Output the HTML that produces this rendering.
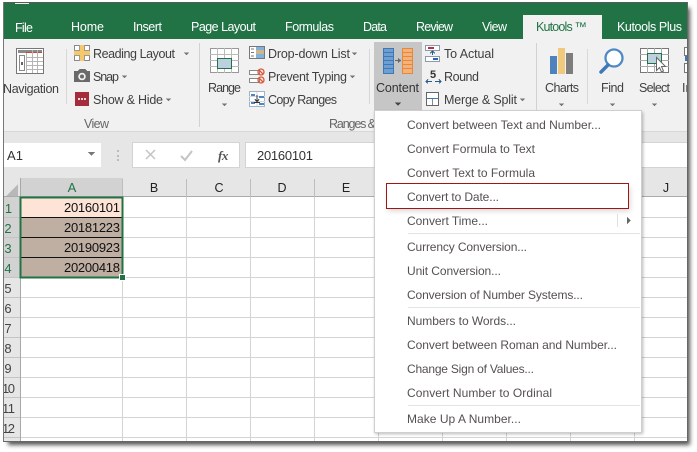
<!DOCTYPE html>
<html><head><meta charset="utf-8"><title>Kutools Content menu</title>
<style>
html,body{margin:0;padding:0;background:#fff;width:697px;height:452px;overflow:hidden}
svg{display:block}
text{font-family:"Liberation Sans",sans-serif;font-size:12.5px;fill:#404040}
.t{fill:#fff;font-size:12.5px}
.m{fill:#565050;font-size:12px}
.h{fill:#222;font-size:12.5px}
.r{fill:#444;font-size:13px}
.s{fill:#217346;font-size:13px}
.d{fill:#111;font-size:13px}
</style></head><body>
<svg width="697" height="452" viewBox="0 0 697 452" xmlns="http://www.w3.org/2000/svg" shape-rendering="crispEdges">
<defs>
<filter id="sh" x="-5%" y="-5%" width="110%" height="110%"><feGaussianBlur stdDeviation="2"/></filter>
<filter id="ms" x="-5%" y="-5%" width="110%" height="110%"><feGaussianBlur stdDeviation="1.5"/></filter>
<filter id="rs" x="-5%" y="-30%" width="110%" height="160%"><feGaussianBlur stdDeviation="3"/></filter>
<clipPath id="win"><rect x="3" y="2" width="684" height="440"/></clipPath>
</defs>

<!-- window shadow -->
<rect x="8" y="8" width="682" height="437" fill="#555" filter="url(#sh)"/>
<!-- window -->
<rect x="3" y="2" width="685" height="440" fill="#fff"/>

<!-- title band -->
<rect x="3" y="3" width="685" height="36" fill="#217346"/>
<rect x="15" y="3" width="14" height="1" fill="#e8f0ea"/>
<rect x="523" y="15" width="79" height="24" fill="#f1f1f1"/>
<text class="t" x="15" y="32" textLength="18">File</text>
<text class="t" x="71" y="31" textLength="33">Home</text>
<text class="t" x="133" y="31" textLength="29">Insert</text>
<text class="t" x="191" y="31" textLength="65">Page Layout</text>
<text class="t" x="285" y="31" textLength="49">Formulas</text>
<text class="t" x="363" y="31" textLength="24">Data</text>
<text class="t" x="416" y="31" textLength="37">Review</text>
<text class="t" x="482" y="31" textLength="25">View</text>
<text x="536" y="31" textLength="51" style="fill:#217346">Kutools ™</text>
<text class="t" x="617" y="31" textLength="65">Kutools Plus</text>

<!-- ribbon -->
<rect x="3" y="39" width="685" height="92" fill="#f1f1f1"/>
<rect x="3" y="131" width="685" height="47" fill="#e6e6e6"/>
<rect x="3" y="131" width="685" height="1" fill="#d8d8d8"/>
<rect x="66" y="49" width="1" height="55" fill="#d8d8d8"/>
<rect x="199" y="43" width="1" height="84" fill="#d2d2d2"/>
<rect x="369" y="49" width="1" height="55" fill="#d8d8d8"/>
<rect x="536" y="43" width="1" height="84" fill="#d2d2d2"/>
<rect x="587" y="49" width="1" height="55" fill="#d8d8d8"/>

<!-- Navigation icon -->
<rect x="16.500" y="48.500" width="27" height="25" fill="#fff" stroke="#777"/>
<rect x="18" y="50" width="24" height="3" fill="#8a8a8a"/>
<rect x="26" y="52" width="16" height="1" fill="#c8473a"/>
<path d="M26.500 53V73M32.500 50V73M37.500 50V73M27 57.500H43M27 61.500H43M27 65.500H43M27 69.500H43" stroke="#b5b5b5" fill="none"/>
<rect x="19.500" y="55.500" width="5" height="15" fill="#fff" stroke="#8a8a8a"/>
<rect x="21" y="62" width="2" height="3" fill="#666"/>
<text x="3" y="93" textLength="56">Navigation</text>

<!-- Reading layout icon -->
<rect x="74.500" y="45.500" width="15" height="15" fill="#fff" stroke="#888"/>
<path d="M79.500 45V61M84.500 45V61M74 50.500H90M74 55.500H90" stroke="#999" fill="none"/>
<rect x="74" y="51" width="16" height="4" fill="#f5c969"/>
<rect x="80" y="45" width="4" height="16" fill="#f5c969"/>
<text x="93" y="58" textLength="82">Reading Layout</text>
<path d="M184 52.500h5l-2.500 3z" fill="#777"/>

<!-- Snap icon -->
<path d="M74 71h4l1.500-2h6l1.500 2h3v11H74z" fill="#6a6a6a"/>
<circle cx="82" cy="76.500" r="3.800" fill="#f1f1f1" shape-rendering="auto"/>
<circle cx="82" cy="76.500" r="2" fill="#6a6a6a" shape-rendering="auto"/>
<text x="93" y="81" textLength="26">Snap</text>
<path d="M122 75.500h5l-2.500 3z" fill="#777"/>

<!-- Show & Hide icon -->
<rect x="75" y="92" width="14" height="14" fill="#a52c3a"/>
<rect x="78" y="98" width="2" height="2" fill="#f3d9dc"/>
<rect x="81" y="98" width="2" height="2" fill="#f3d9dc"/>
<rect x="84" y="98" width="2" height="2" fill="#f3d9dc"/>
<text x="93" y="104" textLength="70">Show &amp; Hide</text>
<path d="M166 98.500h5l-2.500 3z" fill="#777"/>

<text x="84" y="128" textLength="25" style="fill:#666">View</text>

<!-- Range icon -->
<rect x="210.500" y="48.500" width="28" height="24" fill="#fff" stroke="#999"/>
<path d="M217.500 48V73M224.500 48V73M231.500 48V73M210 54.500H239M210 60.500H239M210 66.500H239" stroke="#bbb" fill="none"/>
<rect x="217.500" y="58.500" width="14" height="10" fill="#bcd0e0" stroke="#217346"/>
<text x="208" y="92" textLength="33">Range</text>
<path d="M222 103.500h5l-2.500 3z" fill="#777"/>

<!-- Drop-down list icon -->
<rect x="249.500" y="46.500" width="15" height="12" fill="#fff" stroke="#777"/>
<rect x="256" y="47" width="8" height="3" fill="#7fb2dc"/>
<rect x="256" y="50" width="8" height="4" fill="#cdb68a"/>
<rect x="256" y="54" width="8" height="4" fill="#7fb2dc"/>
<path d="M251 49h3M251 52.500h3M251 56h3" stroke="#777" fill="none"/>
<text x="268" y="58" textLength="82">Drop-down List</text>
<path d="M352 52.500h5l-2.500 3z" fill="#777"/>

<!-- Prevent typing icon -->
<rect x="249.500" y="70.500" width="10" height="4" fill="#fff" stroke="#888"/>
<rect x="249.500" y="78.500" width="10" height="4" fill="#fff" stroke="#888"/>
<g shape-rendering="auto" fill="none" stroke="#d9583b" stroke-width="1.300">
<circle cx="261" cy="72" r="3"/><path d="M259 70l4 4"/>
<circle cx="261" cy="80" r="3"/><path d="M259 78l4 4"/>
</g>
<text x="268" y="81" textLength="79">Prevent Typing</text>
<path d="M350 75.500h5l-2.500 3z" fill="#777"/>

<!-- Copy ranges icon -->
<rect x="249.500" y="91.500" width="15" height="15" fill="#fff" stroke="#9fb4c6"/>
<path d="M249 96.500H265M249 101.500H265M257 92V106" stroke="#d0d8df" fill="none"/>
<rect x="251" y="94" width="4" height="2" fill="#4f86c0"/>
<rect x="259" y="96" width="5" height="2" fill="#4f86c0"/>
<rect x="251" y="102" width="4" height="2" fill="#4f86c0"/>
<rect x="259" y="103" width="5" height="2" fill="#4f86c0"/>
<path d="M257 95v6M255 99.500l2 2 2-2M254 102.500h6" stroke="#333" fill="none"/>
<text x="268" y="104" textLength="69">Copy Ranges</text>

<text x="329" y="128" textLength="47" style="fill:#666">Ranges &amp;</text>

<!-- Content button -->
<rect x="374" y="42" width="48" height="69" fill="#c6c6c6"/>
<rect x="383.500" y="48.500" width="10" height="25" fill="#6f9fd0" stroke="#3f78b8"/>
<path d="M384 52.500H393M384 56.500H393M384 60.500H393M384 64.500H393M384 68.500H393" stroke="#3f78b8" fill="none"/>
<rect x="402.500" y="48.500" width="10" height="25" fill="#f3b27a" stroke="#e8873a"/>
<path d="M403 52.500H412M403 56.500H412M403 60.500H412M403 64.500H412M403 68.500H412" stroke="#e8873a" fill="none"/>
<path d="M395 60.500h5M398.500 59v3l2-1.500z" stroke="#666" fill="#666"/>
<text x="376" y="92" textLength="43" style="fill:#333">Content</text>
<path d="M395 102.500h6l-3 3.500z" fill="#444"/>

<!-- To Actual icon -->
<rect x="425.500" y="45.500" width="14" height="5" fill="#fff" stroke="#8a9bb0"/>
<rect x="428" y="47" width="6" height="2" fill="#b3343f"/>
<rect x="425.500" y="56.500" width="14" height="5" fill="#fff" stroke="#8a9bb0"/>
<rect x="433" y="58" width="5" height="2" fill="#2e5fb3"/>
<path d="M432.500 51v4M430 53.500l2.500-2.500 2.500 2.500" stroke="#2a5a8a" fill="none"/>
<text x="444" y="58" textLength="50">To Actual</text>

<!-- Round icon -->
<text x="430" y="78" style="font-size:11px;font-weight:bold;fill:#333" textLength="7">5</text>
<path d="M426 81.500h6M428 79.500l-2 2 2 2M435 81.500h6M439 79.500l2 2-2 2" stroke="#2a5a8a" fill="none"/>
<text x="444" y="81" textLength="35">Round</text>

<!-- Merge icon -->
<rect x="426.500" y="92.500" width="12" height="13" fill="#fff" stroke="#666"/>
<path d="M427 98.500H438" stroke="#3f78b8" fill="none"/>
<path d="M432.500 99V105" stroke="#888" fill="none"/>
<text x="444" y="104" textLength="73">Merge &amp; Split</text>
<path d="M520 98.500h5l-2.500 3z" fill="#777"/>

<!-- Charts icon -->
<rect x="550" y="56" width="7" height="18" fill="#4f81bd"/>
<rect x="558" y="48" width="7" height="26" fill="#efc97d"/>
<rect x="566" y="53" width="7" height="21" fill="#7d7d7d"/>
<text x="545" y="92" textLength="34">Charts</text>
<path d="M559 103.500h5l-2.500 3z" fill="#777"/>

<!-- Find icon -->
<g shape-rendering="auto" fill="none">
<circle cx="614" cy="58" r="8.500" stroke="#4f8ac4" stroke-width="2.300" fill="#fff"/>
<path d="M608 65l-7 7" stroke="#3f78b8" stroke-width="3.500" stroke-linecap="round"/>
</g>
<text x="601" y="92" textLength="23">Find</text>
<path d="M610 103.500h5l-2.500 3z" fill="#777"/>

<!-- Select icon -->
<rect x="640.500" y="48.500" width="28" height="24" fill="#fff" stroke="#777"/>
<path d="M647.500 48V73M654.500 48V73M661.500 48V73M640 54.500H669M640 60.500H669M640 66.500H669" stroke="#aaa" fill="none"/>
<rect x="647.500" y="53.500" width="14" height="10" fill="#bcd0e0" stroke="#217346"/>
<path d="M656.500 57.500v13l3-3 2 4.500 2-1-2-4.500h4z" fill="#fff" stroke="#666" shape-rendering="auto"/>
<text x="639" y="92" textLength="31">Select</text>
<path d="M652 103.500h5l-2.500 3z" fill="#777"/>

<!-- partial icon at edge -->
<rect x="684.500" y="47.500" width="3" height="8" fill="#fff" stroke="#777"/>
<rect x="684.500" y="63.500" width="3" height="9" fill="#fff" stroke="#777"/>
<rect x="685" y="56" width="3" height="5" fill="#3f78b8"/>
<text x="682" y="92" clip-path="url(#win)">In</text>

<!-- Name box and formula bar -->
<rect x="3" y="143" width="98" height="24" fill="#fff"/>
<rect x="132.500" y="142.500" width="107" height="25" fill="#fff" stroke="#d4d4d4"/>
<rect x="245.500" y="142.500" width="442" height="25" fill="#fff" stroke="#d4d4d4"/>
<text x="7" y="160" textLength="16" style="fill:#333;font-size:13px">A1</text>
<path d="M88 152h7l-3.500 4z" fill="#777"/>
<path d="M117 150h2v2h-2zM117 155h2v2h-2zM117 159h2v2h-2z" fill="#bbb"/>
<path d="M146 150l9 9M155 150l-9 9" stroke="#c4c4c4" stroke-width="1.500" fill="none" shape-rendering="auto"/>
<path d="M181 156l4 4 7-9" stroke="#c4c4c4" stroke-width="2" fill="none" shape-rendering="auto"/>
<text x="218" y="160" style="font-family:'Liberation Serif',serif;font-style:italic;font-weight:bold;font-size:13px;letter-spacing:-.5px;fill:#555">fx</text>
<text x="257" y="160" textLength="56" style="fill:#333;font-size:13px">20160101</text>

<!-- Headers -->
<rect x="4" y="178" width="684" height="19" fill="#e6e6e6"/>
<rect x="4" y="197" width="16" height="244" fill="#e6e6e6"/>
<rect x="4" y="197" width="16" height="80" fill="#d2d2d2"/>
<rect x="20" y="178" width="103" height="19" fill="#d2d2d2"/>
<path d="M18 184v12H6z" fill="#b8b8b8"/>
<rect x="4" y="196" width="684" height="1" fill="#ababab"/>
<path d="M122.500 179V197M186.500 179V197M250.500 179V197M314.500 179V197M378.500 179V197M442.500 179V197M506.500 179V197M570.500 179V197M634.500 179V197" stroke="#bdbdbd" fill="none"/>
<rect x="20" y="178" width="1" height="264" fill="#a8a8a8"/>
<text class="s" x="72" y="192" text-anchor="middle">A</text>
<text class="h" x="154" y="192" text-anchor="middle">B</text>
<text class="h" x="219" y="192" text-anchor="middle">C</text>
<text class="h" x="282" y="192" text-anchor="middle">D</text>
<text class="h" x="346" y="192" text-anchor="middle">E</text>
<text class="h" x="666" y="192" text-anchor="middle">J</text>

<!-- Gridlines -->
<path d="M21 217.500H688M21 237.500H688M21 257.500H688M21 277.500H688M21 297.500H688M21 317.500H688M21 337.500H688M21 357.500H688M21 377.500H688M21 397.500H688M21 417.500H688M21 437.500H688" stroke="#d4d4d4" fill="none"/>
<path d="M122.500 197V441M186.500 197V441M250.500 197V441M314.500 197V441M378.500 197V441M442.500 197V441M506.500 197V441M570.500 197V441M634.500 197V441" stroke="#d4d4d4" fill="none"/>
<path d="M4 217.500H20M4 237.500H20M4 257.500H20M4 277.500H20M4 297.500H20M4 317.500H20M4 337.500H20M4 357.500H20M4 377.500H20M4 397.500H20M4 417.500H20M4 437.500H20" stroke="#c4c4c4" fill="none"/>

<!-- Row numbers -->
<g clip-path="url(#win)">
<text class="s" x="8.500" y="213" text-anchor="middle">1</text>
<text class="s" x="8" y="233" text-anchor="middle">2</text>
<text class="s" x="8" y="253" text-anchor="middle">3</text>
<text class="s" x="8" y="273" text-anchor="middle">4</text>
<text class="r" x="8" y="293" text-anchor="middle">5</text>
<text class="r" x="8" y="313" text-anchor="middle">6</text>
<text class="r" x="8" y="333" text-anchor="middle">7</text>
<text class="r" x="8" y="353" text-anchor="middle">8</text>
<text class="r" x="8" y="373" text-anchor="middle">9</text>
<text class="r" x="2" y="393" textLength="13">10</text>
<text class="r" x="2" y="413" textLength="13">11</text>
<text class="r" x="2" y="433" textLength="13">12</text>
</g>

<!-- Cells -->
<rect x="21" y="197" width="101" height="20" fill="#fde4d6"/>
<rect x="21" y="217" width="101" height="60" fill="#bfaea2"/>
<rect x="21" y="217" width="101" height="1" fill="#111"/>
<rect x="21" y="237" width="101" height="1" fill="#111"/>
<rect x="21" y="257" width="101" height="1" fill="#111"/>
<text class="d" x="64" y="212" textLength="56">20160101</text>
<text class="d" x="64" y="232" textLength="56">20181223</text>
<text class="d" x="64" y="252" textLength="56">20190923</text>
<text class="d" x="64" y="272" textLength="56">20200418</text>
<rect x="20.500" y="197.500" width="102" height="80" fill="none" stroke="#217346" stroke-width="2"/>
<rect x="119" y="274" width="7" height="7" fill="#fff"/>
<rect x="120" y="275" width="5" height="5" fill="#217346"/>

<!-- Window frame -->
<rect x="3" y="2" width="685" height="1" fill="#5a5a5a"/>
<rect x="3" y="2" width="1" height="440" fill="#777"/>
<rect x="687" y="2" width="1" height="440" fill="#666"/>
<rect x="3" y="441" width="685" height="1" fill="#666"/>

<!-- Menu -->
<rect x="375" y="112" width="268" height="322" fill="#000" opacity=".28" filter="url(#ms)"/>
<rect x="375" y="111" width="266" height="321" fill="#fff"/>
<rect x="374.500" y="110.500" width="267" height="322" fill="none" stroke="#cfcfcf"/>

<rect x="388" y="187" width="242" height="24" fill="#000" opacity=".16" filter="url(#rs)"/>
<rect x="386" y="184" width="243" height="25" fill="#fff"/>

<text class="m" x="407" y="129" textLength="194">Convert between Text and Number...</text>
<text class="m" x="407" y="153" textLength="128">Convert Formula to Text</text>
<text class="m" x="407" y="177" textLength="128">Convert Text to Formula</text>
<text class="m" x="407" y="201" textLength="92">Convert to Date...</text>
<text class="m" x="407" y="225" textLength="81">Convert Time...</text>
<rect x="617" y="214" width="1" height="13" fill="#e0e0e0"/>
<path d="M627 217v7l4-3.500z" fill="#666"/>
<rect x="408" y="233" width="232" height="1" fill="#e2e4e8"/>
<text class="m" x="407" y="251" textLength="120">Currency Conversion...</text>
<text class="m" x="407" y="275" textLength="94">Unit Conversion...</text>
<text class="m" x="407" y="299" textLength="176">Conversion of Number Systems...</text>
<rect x="408" y="307" width="232" height="1" fill="#e2e4e8"/>
<text class="m" x="407" y="325" textLength="109">Numbers to Words...</text>
<text class="m" x="407" y="349" textLength="210">Convert between Roman and Number...</text>
<text class="m" x="407" y="373" textLength="127">Change Sign of Values...</text>
<text class="m" x="407" y="397" textLength="145">Convert Number to Ordinal</text>
<rect x="408" y="405" width="232" height="1" fill="#e2e4e8"/>
<text class="m" x="407" y="423" textLength="114">Make Up A Number...</text>

<rect x="386.500" y="183.500" width="242" height="25" fill="none" stroke="#a31515"/>
</svg>
</body></html>
